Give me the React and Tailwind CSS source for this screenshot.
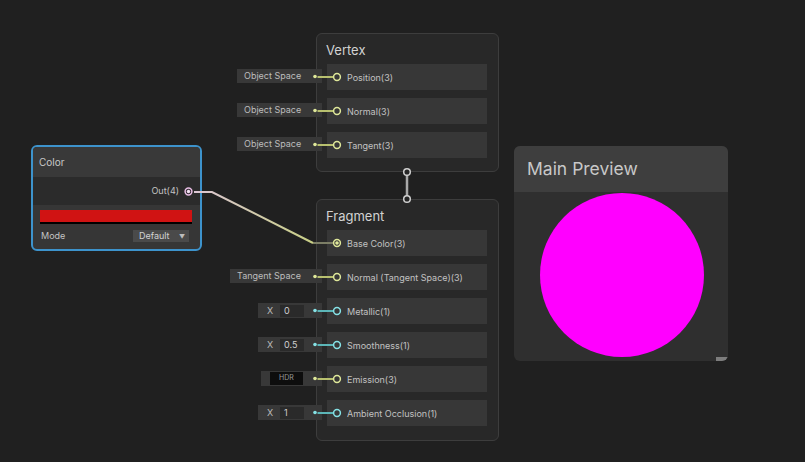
import React from 'react';

const V3 = { line: '#b8c06f', ring: '#dfe89a' };
const V1 = { line: '#5cb6b8', ring: '#86e2e6' };

function TextField({ width, children }) {
  return (
    <div
      className="absolute top-[5px] right-[calc(100%+5px)] h-[14px] bg-[#383838] flex items-center pl-[7px] text-[9px] text-[#bdbdbd] whitespace-nowrap"
      style={{ width }}
    >
      {children}
    </div>
  );
}

function FloatField({ value }) {
  return (
    <div className="absolute top-[5px] right-[calc(100%+5px)] w-[64px] h-[15px] bg-[#383838] flex items-center pl-[9px] text-[9px] text-[#bdbdbd]">
      <span className="w-[13px]">X</span>
      <div className="w-[24px] h-[12px] bg-[#2a2a2a] flex items-center pl-[4px] text-[#cfcfcf]">{value}</div>
    </div>
  );
}

function HdrField() {
  return (
    <div className="absolute top-[5px] right-[calc(100%+5px)] w-[61px] h-[15px] bg-[#383838] flex items-center pl-[9px]">
      <div className="w-[33px] h-[13px] bg-[#0d0d0d] flex items-center justify-center text-[7px] text-[#9a9a9a]">HDR</div>
    </div>
  );
}

function PortRow({ label, field, kind = V3, connected = false }) {
  return (
    <div className="relative h-[26px] bg-[#373737] flex items-center pl-[20px] pt-[1px] text-[9px] text-[#c2c2c2] whitespace-nowrap">
      {field}
      <svg className="absolute left-[-17px] top-0" width="32" height="26">
        {connected ? (
          <>
            <line x1="3" y1="13" x2="24" y2="13" stroke="#7c7e66" strokeWidth="2" />
            <circle cx="27" cy="13" r="3.4" fill="#373737" stroke={kind.ring} strokeWidth="1.5" />
            <circle cx="27" cy="13" r="1.8" fill={kind.ring} />
          </>
        ) : (
          <>
            <circle cx="5" cy="12.5" r="1.8" fill={kind.ring} />
            <line x1="7.5" y1="13" x2="24" y2="13" stroke={kind.line} strokeWidth="2" />
            <circle cx="27" cy="13" r="3.4" fill="#373737" stroke={kind.ring} strokeWidth="1.5" />
          </>
        )}
      </svg>
      <span>{label}</span>
    </div>
  );
}

function MasterNode({ title, className, children }) {
  return (
    <div className={`absolute w-[183px] rounded-[6px] border border-[#3d3d3d] bg-[#282828] pl-[10px] pr-[11px] pb-[13px] ${className}`}>
      <div className="h-[30px] flex items-center pt-[3px] -ml-[1px] text-[13px] text-[#d2d2d2]">{title}</div>
      <div className="flex flex-col gap-[8px]">{children}</div>
    </div>
  );
}

function ColorNode() {
  return (
    <div className="absolute left-[31px] top-[145px] w-[171px] h-[106px] rounded-[6px] border-2 border-[#3d93cc] bg-[#363636] overflow-hidden">
      <div className="h-[30px] bg-[#393939] flex items-center pl-[6px] text-[10px] text-[#c8c8c8]">Color</div>
      <div className="h-[28px] bg-[#2b2b2b] flex items-center justify-end pr-[7px] gap-[5px] text-[9px] text-[#c4c4c4]">
        <span>Out(4)</span>
        <svg width="9" height="9">
          <circle cx="4.5" cy="4.5" r="3.4" fill="#3a2f3a" stroke="#e6bde2" strokeWidth="1.5" />
          <circle cx="4.5" cy="4.5" r="1.7" fill="#f4e2f2" />
        </svg>
      </div>
      <div className="pl-[7px] pr-[8px] pt-[5px]">
        <div className="h-[14px] bg-[#d01313] border-b-2 border-black" />
        <div className="mt-[6px] h-[12px] flex items-center justify-between text-[9px] text-[#c4c4c4]">
          <span className="pl-[1px]">Mode</span>
          <div className="w-[56px] h-[12px] bg-[#4a4a4a] flex items-center justify-between pl-[6px] pr-[4px] mr-[3px] text-[#d2d2d2]">
            <span>Default</span>
            <span className="text-[6px] text-[#bdbdbd]">▼</span>
          </div>
        </div>
      </div>
    </div>
  );
}

function MainPreview() {
  return (
    <div className="absolute left-[514px] top-[146px] w-[214px] h-[215px] rounded-[6px] bg-[#2f2f2f] overflow-hidden flex flex-col">
      <div className="h-[46px] bg-[#3e3e3e] flex items-center pl-[13px] text-[17.5px] text-[#c8c8c8]">Main Preview</div>
      <div className="relative flex-1 flex justify-center pt-[1px] pl-[2px]">
        <div className="w-[164px] h-[164px] rounded-full bg-[#ff00ff]" />
        <div className="absolute right-0 bottom-0 w-[12px] h-[4px] bg-[#7d7d7d]" />
      </div>
    </div>
  );
}

export default function App() {
  return (
    <div
      className="relative w-[805px] h-[462px] bg-[#202020] overflow-hidden"
      style={{ fontFamily: 'Inter, "Noto Sans", "Liberation Sans", sans-serif' }}
    >
      <MasterNode title="Vertex" className="left-[316px] top-[33px] h-[139px]">
        <PortRow label="Position(3)" field={<TextField width={85}>Object Space</TextField>} />
        <PortRow label="Normal(3)" field={<TextField width={85}>Object Space</TextField>} />
        <PortRow label="Tangent(3)" field={<TextField width={85}>Object Space</TextField>} />
      </MasterNode>

      <MasterNode title="Fragment" className="left-[316px] top-[199px] h-[242px]">
        <PortRow label="Base Color(3)" connected />
        <PortRow label="Normal (Tangent Space)(3)" field={<TextField width={92}>Tangent Space</TextField>} />
        <PortRow label="Metallic(1)" kind={V1} field={<FloatField value="0" />} />
        <PortRow label="Smoothness(1)" kind={V1} field={<FloatField value="0.5" />} />
        <PortRow label="Emission(3)" field={<HdrField />} />
        <PortRow label="Ambient Occlusion(1)" kind={V1} field={<FloatField value="1" />} />
      </MasterNode>

      <ColorNode />
      <MainPreview />

      {/* wires */}
      <svg className="absolute left-0 top-0 pointer-events-none" width="805" height="462">
        <defs>
          <linearGradient id="w" x1="193" y1="0" x2="313" y2="0" gradientUnits="userSpaceOnUse">
            <stop offset="0" stopColor="#dcc6d6" />
            <stop offset="1" stopColor="#c8cf85" />
          </linearGradient>
        </defs>
        <polyline points="194,192 212,192 313,243" fill="none" stroke="url(#w)" strokeWidth="2" />
        <line x1="407" y1="175" x2="407" y2="196" stroke="#a9a9a9" strokeWidth="2.5" />
        <circle cx="407" cy="172" r="3.3" fill="#262626" stroke="#d0d0d0" strokeWidth="1.5" />
        <circle cx="407" cy="199" r="3.3" fill="#262626" stroke="#d0d0d0" strokeWidth="1.5" />
      </svg>
    </div>
  );
}
